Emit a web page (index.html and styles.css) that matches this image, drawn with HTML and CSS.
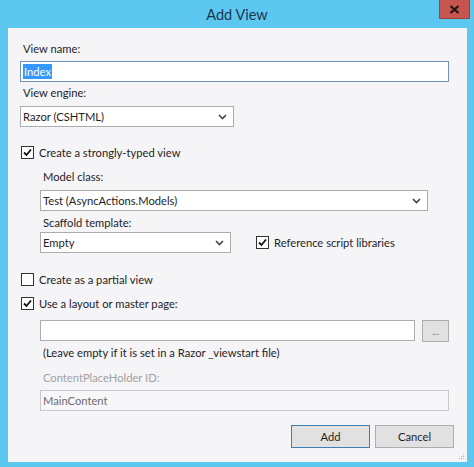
FILE: index.html
```html
<!DOCTYPE html>
<html>
<head>
<meta charset="utf-8">
<link rel="stylesheet" href="styles.css">
</head>
<body>
<div class="window">
  <div class="titlebar">
    <span class="title">Add View</span>
    <div class="close">
      <svg width="11" height="9" viewBox="0 0 11 9"><path d="M1.5 1 L9.5 8 M9.5 1 L1.5 8" stroke="#1a1a1a" stroke-width="2.2" fill="none"/></svg>
    </div>
  </div>
  <div class="panel">
    <div class="label l-first">View name:</div>
    <div class="field focused w-full"><span class="sel">Index</span></div>

    <div class="label l-engine">View engine:</div>
    <div class="combo w-engine"><span>Razor (CSHTML)</span><svg class="chev" width="9" height="6" viewBox="0 0 9 6"><path d="M1 1 L4.5 4.5 L8 1" stroke="#444" stroke-width="1.6" fill="none"/></svg></div>

    <div class="check-row r-strong"><span class="cb"><svg width="11" height="11" viewBox="0 0 11 11"><path d="M2 5.5 L4.5 8 L9 2.5" stroke="#111" stroke-width="1.8" fill="none"/></svg></span><span>Create a strongly-typed view</span></div>

    <div class="indent">
      <div class="label l-model">Model class:</div>
      <div class="combo w-model"><span>Test (AsyncActions.Models)</span><svg class="chev" width="9" height="6" viewBox="0 0 9 6"><path d="M1 1 L4.5 4.5 L8 1" stroke="#444" stroke-width="1.6" fill="none"/></svg></div>

      <div class="label l-scaffold">Scaffold template:</div>
      <div class="scaffold-row">
        <div class="combo w-scaffold"><span>Empty</span><svg class="chev" width="9" height="6" viewBox="0 0 9 6"><path d="M1 1 L4.5 4.5 L8 1" stroke="#444" stroke-width="1.6" fill="none"/></svg></div>
        <div class="check-row r-ref"><span class="cb"><svg width="11" height="11" viewBox="0 0 11 11"><path d="M2 5.5 L4.5 8 L9 2.5" stroke="#111" stroke-width="1.8" fill="none"/></svg></span><span>Reference script libraries</span></div>
      </div>
    </div>

    <div class="check-row r-partial"><span class="cb"></span><span>Create as a partial view</span></div>
    <div class="check-row r-layout"><span class="cb"><svg width="11" height="11" viewBox="0 0 11 11"><path d="M2 5.5 L4.5 8 L9 2.5" stroke="#111" stroke-width="1.8" fill="none"/></svg></span><span>Use a layout or master page:</span></div>

    <div class="indent">
      <div class="layout-row">
        <div class="field w-layout"></div>
        <div class="btn browse">...</div>
      </div>
      <div class="label l-hint">(Leave empty if it is set in a Razor _viewstart file)</div>
      <div class="label disabled l-cph">ContentPlaceHolder ID:</div>
      <div class="field disabled-field w-cph"><span>MainContent</span></div>
    </div>

    <div class="buttons">
      <div class="btn default">Add</div>
      <div class="btn">Cancel</div>
    </div>
    <svg class="grip" width="6" height="6" viewBox="0 0 6 6"><rect x="4" y="0" width="1" height="1" fill="#b8b8b8"/><rect x="2" y="2" width="1" height="1" fill="#b8b8b8"/><rect x="4" y="2" width="1" height="1" fill="#b8b8b8"/><rect x="0" y="4" width="1" height="1" fill="#b8b8b8"/><rect x="2" y="4" width="1" height="1" fill="#b8b8b8"/><rect x="4" y="4" width="1" height="1" fill="#b8b8b8"/></svg>
  </div>
</div>
</body>
</html>
```

FILE: styles.css
```css
html, body {
  margin: 0;
  padding: 0;
}
body {
  width: 474px;
  height: 467px;
  overflow: hidden;
  background: #5cc8ef;
  font-family: Lato, "Noto Sans", sans-serif;
  font-size: 11.2px;
  color: #1e1e1e;
}
.window {
  width: 474px;
  height: 467px;
  display: flex;
  flex-direction: column;
}
.titlebar {
  height: 28px;
  position: relative;
  display: flex;
  align-items: center;
  justify-content: center;
}
.title {
  font-size: 14.5px;
  color: #1d3553;
  margin-top: 1px;
}
.close {
  position: absolute;
  left: 439px;
  top: 0;
  width: 31px;
  height: 19px;
  box-sizing: border-box;
  background: #c8544f;
  border: 1px solid #9c4340;
  border-top: none;
  display: flex;
  align-items: center;
  justify-content: center;
}
.panel {
  position: relative;
  margin: 0 7px 0 8px;
  height: 434px;
  background: #f5f4f7;
  padding: 0 0 0 12px;
  box-sizing: border-box;
}
.label {
  height: 16px;
  line-height: 16px;
  padding-left: 3px;
  white-space: nowrap;
}
.l-first { padding-top: 13px; }
.field, .combo {
  box-sizing: border-box;
  height: 21px;
  background: #fff;
  border: 1px solid #abadb3;
  display: flex;
  align-items: center;
  padding-left: 2px;
  white-space: nowrap;
}
.focused { border-color: #6f93bd; }
.sel {
  background: #3399ff;
  color: #fff;
  padding: 0 1px;
  line-height: 15px;
}
.w-full { width: 429px; margin-top: 4px; }
.l-engine { margin-top: 3px; }
.combo {
  border-color: #acacac;
  justify-content: space-between;
  padding-right: 6px;
}
.w-engine { width: 214px; margin-top: 5px; }
.check-row {
  display: flex;
  align-items: center;
  height: 16px;
  white-space: nowrap;
}
.cb {
  width: 13px;
  height: 13px;
  box-sizing: border-box;
  border: 1px solid #333;
  background: #fff;
  margin: 0 5px 0 1px;
  display: flex;
  align-items: center;
  justify-content: center;
}
.r-strong { margin-top: 17px; }
.indent { padding-left: 20px; }
.l-model { margin-top: 9px; }
.w-model { width: 388px; margin-top: 5px; }
.l-scaffold { margin-top: 4px; }
.scaffold-row {
  display: flex;
  align-items: center;
  margin-top: 1px;
}
.w-scaffold { width: 191px; }
.r-ref { margin-left: 24px; }
.r-partial { margin-top: 18px; }
.r-layout { margin-top: 8px; }
.layout-row {
  display: flex;
  margin-top: 9px;
  gap: 7px;
}
.w-layout { width: 375px; }
.btn {
  box-sizing: border-box;
  height: 23px;
  background: #e1e1e1;
  border: 1px solid #adadad;
  display: flex;
  align-items: center;
  justify-content: center;
}
.browse {
  width: 27px;
  height: 22px;
  color: #777;
  font-size: 10px;
}
.l-hint { margin-top: 3px; }
.disabled { color: #a2a2a2; }
.l-cph { margin-top: 9px; }
.disabled-field {
  background: #f7f6f9;
  border-color: #c9c9c9;
  color: #6d6d6d;
}
.w-cph { width: 409px; margin-top: 4px; }
.buttons {
  display: flex;
  gap: 5px;
  margin-top: 14px;
  padding-left: 271px;
}
.buttons .btn { width: 79px; }
.btn.default { border-color: #3c7fb1; }
.grip {
  position: absolute;
  right: 2px;
  bottom: 2px;
}
```
